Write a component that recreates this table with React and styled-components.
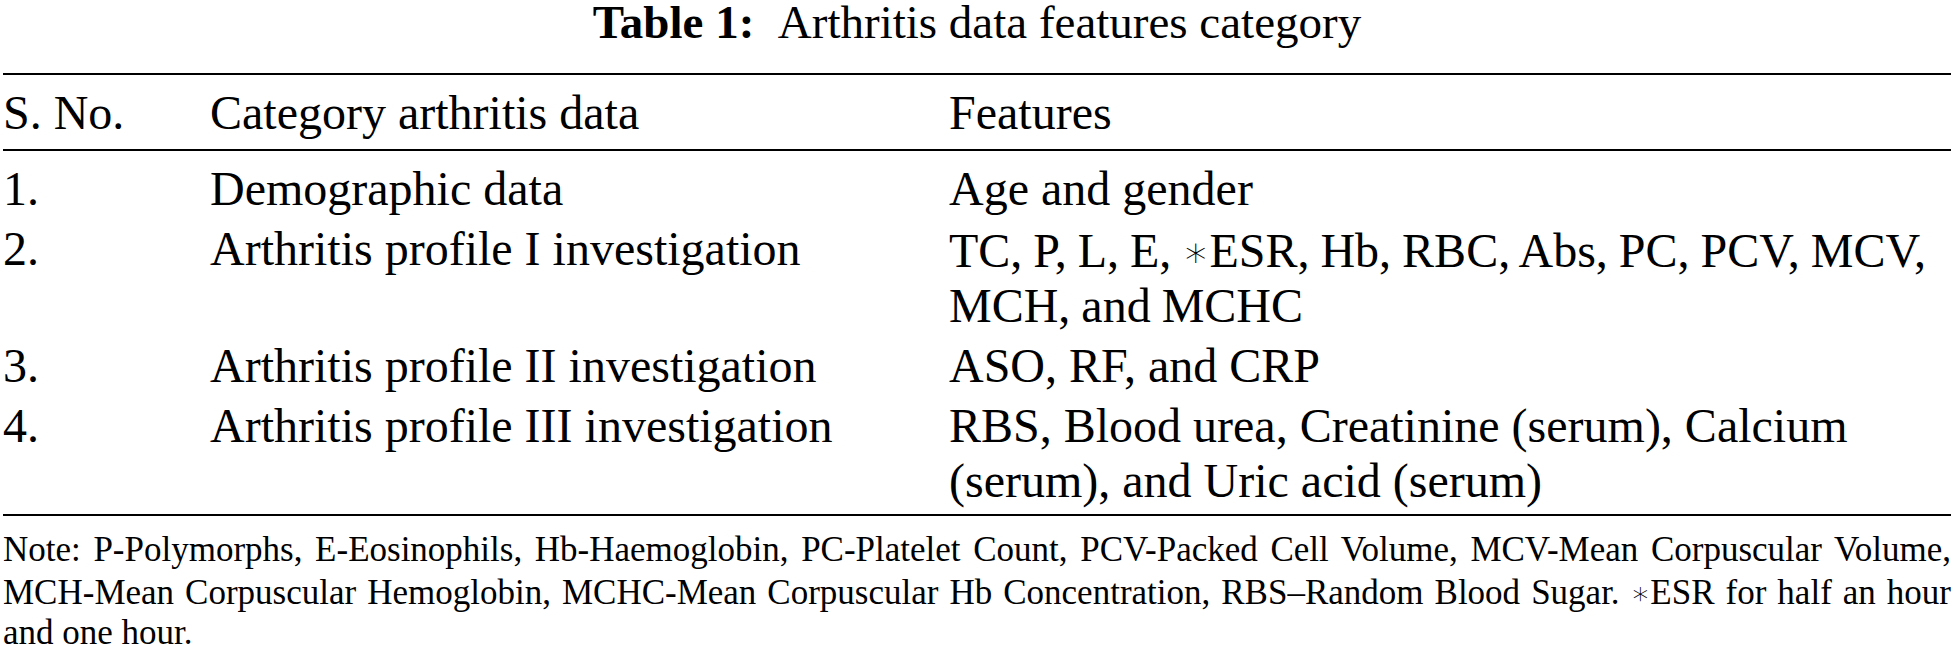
import React from "react";
import styled, { createGlobalStyle } from "styled-components";

const Global = createGlobalStyle`
  html, body { margin: 0; padding: 0; background: #fff; }
  body { font-family: "Liberation Serif", "Times New Roman", serif; color: #000; }
`;

const Page = styled.div`
  width: 1954px;
  box-sizing: border-box;
  padding: 0 3px;
`;

const Caption = styled.div`
  font-size: 47px;
  line-height: 44px;
  text-align: center;
  margin-bottom: 29px;
  white-space: nowrap;
`;

const CaptionLabel = styled.b`
  font-weight: 700;
  margin-right: 0.5em;
`;

const Table = styled.table`
  width: 100%;
  border-collapse: collapse;
  table-layout: fixed;
  font-size: 48px;
  line-height: 55px;
  border-top: 2px solid #000;
  border-bottom: 2px solid #000;
`;

const Col = styled.col`
  width: ${(p) => p.$w};
`;

const HeadCell = styled.th`
  font-weight: 400;
  text-align: left;
  vertical-align: top;
  padding: 10px 0 9px;
  border-bottom: 2px solid #000;
`;

const Row = styled.tr`
  & > td {
    padding-top: ${(p) => (p.$first ? "10px" : "3px")};
    padding-bottom: ${(p) => (p.$last ? "6px" : "2px")};
  }
`;

const Cell = styled.td`
  text-align: left;
  vertical-align: top;
  padding-left: 0;
  padding-right: 0;
  word-spacing: ${(p) => (p.$tight ? "-1px" : "normal")};
`;

const Star = styled.span`
  font-family: "Noto Sans CJK SC", "DejaVu Sans", sans-serif;
  font-weight: 300;
  font-size: 0.9em;
`;

const Note = styled.p`
  margin: 14px 0 0;
  font-size: 35px;
  line-height: 40px;
  text-align: justify;
`;

const rows = [
  ["1.", "Demographic data", <>Age and gender</>],
  [
    "2.",
    "Arthritis profile I investigation",
    <>
      TC, P, L, E, <Star>{"\u2217"}</Star>ESR, Hb, RBC, Abs, PC, PCV, MCV, MCH,
      and MCHC
    </>,
    true,
  ],
  ["3.", "Arthritis profile II investigation", <>ASO, RF, and CRP</>],
  [
    "4.",
    "Arthritis profile III investigation",
    <>
      RBS, Blood urea, Creatinine (serum), Calcium (serum), and Uric acid
      (serum)
    </>,
  ],
];

export default function App() {
  return (
    <>
      <Global />
      <Page>
        <Caption>
          <CaptionLabel>Table 1:</CaptionLabel>Arthritis data features category
        </Caption>
        <Table>
          <colgroup>
            <Col $w="207px" />
            <Col $w="739px" />
            <Col $w="auto" />
          </colgroup>
          <thead>
            <tr>
              <HeadCell>S. No.</HeadCell>
              <HeadCell>Category arthritis data</HeadCell>
              <HeadCell>Features</HeadCell>
            </tr>
          </thead>
          <tbody>
            {rows.map((r, i) => (
              <Row key={i} $first={i === 0} $last={i === rows.length - 1}>
                <Cell>{r[0]}</Cell>
                <Cell>{r[1]}</Cell>
                <Cell $tight={r[3]}>{r[2]}</Cell>
              </Row>
            ))}
          </tbody>
        </Table>
        <Note>
          Note: P-Polymorphs, E-Eosinophils, Hb-Haemoglobin, PC-Platelet Count,
          PCV-Packed Cell Volume, MCV-Mean Corpuscular Volume, MCH-Mean
          Corpuscular Hemoglobin, MCHC-Mean Corpuscular Hb Concentration,
          RBS–Random Blood Sugar. <Star>{"\u2217"}</Star>ESR for half an hour
          and one hour.
        </Note>
      </Page>
    </>
  );
}
